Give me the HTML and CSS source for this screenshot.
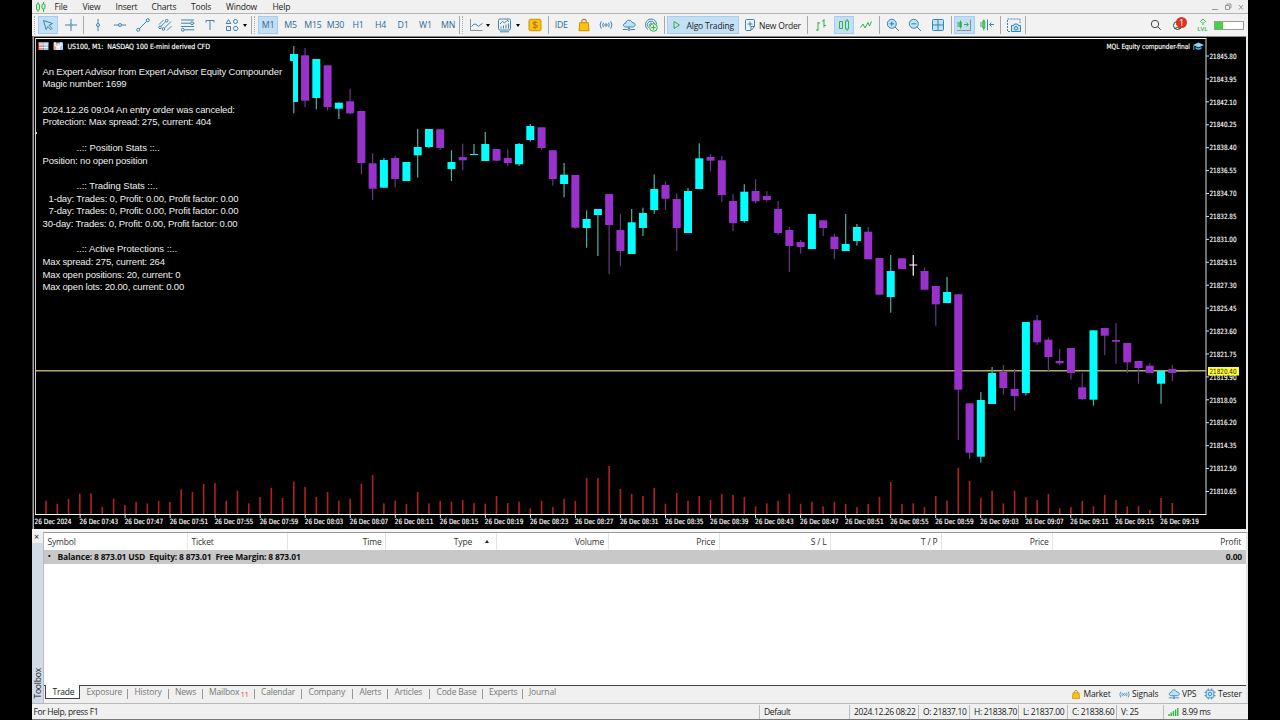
FILE: index.html
```html
<!DOCTYPE html>
<html lang="en">
<head>
<meta charset="utf-8">
<title>US100, M1</title>
<link rel="stylesheet" href="styles.css">
</head>
<body>
<div class="window">
  <header class="menubar">
    <svg class="logo" width="12" height="12" viewBox="0 0 12 12"><path d="M3 1v10M8.500 1v10" class="g"/><rect x="1.500" y="3" width="3" height="6" rx="1" class="g fillbg"/><rect x="7" y="3" width="3" height="5" rx="1" class="g fillbg"/></svg>
    <span>File</span><span>View</span><span>Insert</span><span>Charts</span><span>Tools</span><span>Window</span><span>Help</span>
    <svg class="winctl" width="36" height="10" viewBox="0 0 36 10"><path d="M1 7.500h6M14.500 3.500h4v4h-4zM16 3.500v-1.500h4v4h-1.500M28 3l4 4.500M32 3l-4 4.500"/></svg>
  </header>

  <nav class="toolbar">
    <i class="handle"></i>
    <div class="tool on"><svg width="14" height="14" viewBox="0 0 14 14"><path class="b" d="M2.500 2.500l9 3-3.500 1.800 3 3-1.200 1.300-3-3.100-1.700 3z"/></svg></div>
    <div class="tool"><svg width="14" height="14" viewBox="0 0 14 14"><path class="b" d="M7 1v4.500M7 8.500v4.500M1 7h4.500M8.500 7h4.500"/><circle class="b" cx="7" cy="7" r="1.200"/></svg></div>
    <i class="sep"></i>
    <div class="tool"><svg width="14" height="14" viewBox="0 0 14 14"><path class="b" d="M7 .8v4.700M7 8.500v4.700"/><circle class="b" cx="7" cy="7" r="1.500"/></svg></div>
    <div class="tool"><svg width="14" height="14" viewBox="0 0 14 14"><path class="b" d="M.8 7h4.700M8.500 7h4.700"/><circle class="b" cx="7" cy="7" r="1.500"/></svg></div>
    <div class="tool"><svg width="14" height="14" viewBox="0 0 14 14"><path class="b" d="M3.300 10.800l7.400-7.600"/><circle class="b" cx="2.200" cy="11.800" r="1.500"/><circle class="b" cx="11.800" cy="2.200" r="1.500"/></svg></div>
    <div class="tool"><svg width="14" height="14" viewBox="0 0 14 14"><path class="b" d="M3 8.300l4.700-4.700M6.500 10l6.500-6.500M1 6.500l4.500-4.500M9 12.500l4.500-4.500"/><circle class="b" cx="2" cy="9.300" r="1.300"/><circle class="b" cx="8.700" cy="2.700" r="1.300"/><circle class="b" cx="5.500" cy="11" r="1.300"/></svg></div>
    <div class="tool"><svg width="16" height="14" viewBox="0 0 16 14"><path class="b" d="M1 2h13M1 5.200h9.500M13.500 5.200h1M1 8.500h13M4.300 11.800h10"/><circle class="b" cx="12" cy="5.200" r="1.400"/><circle class="b" cx="2.800" cy="11.800" r="1.400"/></svg></div>
    <div class="tool"><svg width="14" height="14" viewBox="0 0 14 14"><path class="b" d="M3 4.500v-2h8v2M7 2.500v9.500"/></svg></div>
    <div class="tool"><svg width="14" height="14" viewBox="0 0 14 14"><path class="b" d="M3.500 1.500l2.300 4h-4.600zM1.500 8.500h4v4h-4z"/><circle class="b" cx="10.500" cy="3.500" r="2"/><path class="b" d="M9.500 8.500h2.300l1.200 2-1.200 2h-2.300l-1.200-2z"/></svg></div>
    <i class="caret"></i>
    <i class="sep end"></i>
    <i class="handle"></i>
    <div class="tool tf on">M1</div><div class="tool tf">M5</div><div class="tool tf">M15</div><div class="tool tf">M30</div><div class="tool tf">H1</div><div class="tool tf">H4</div><div class="tool tf">D1</div><div class="tool tf">W1</div><div class="tool tf">MN</div>
    <i class="sep"></i>
    <i class="handle"></i>
    <div class="tool"><svg width="14" height="14" viewBox="0 0 14 14"><path class="gray" d="M1.500 1v11.500h12"/><path class="b" d="M2.500 8.500l2.500-2.500 2 .3 2.500 2 4-3"/></svg></div>
    <i class="caret"></i>
    <div class="tool"><svg width="15" height="15" viewBox="0 0 15 15"><rect x="1.500" y="1" width="12" height="11" rx="1.500" class="b"/><path class="b" d="M3 6l2.500-2.500 2 1.500 2.500-2.500 2 1M4 10.500v-2M6.500 10.500v-3M9 10.500v-4M11.500 10.500v-5M3 13.800h9"/></svg></div>
    <i class="caret"></i>
    <div class="tool"><svg width="14" height="14" viewBox="0 0 14 14"><rect x="1" y="1.300" width="12" height="11.400" rx="1.500" class="gold"/><path class="goldline" d="M9.200 4.700c-.8-1-4.200-1-4.200.6 0 1.900 4.300 1 4.300 3 0 1.700-3.600 1.600-4.500.5M7 3v8.300"/></svg></div>
    <i class="sep"></i>
    <div class="tool tf">IDE</div>
    <div class="tool"><svg width="14" height="14" viewBox="0 0 14 14"><path class="goldline" d="M4.800 5v-1.700c0-2.600 4.400-2.600 4.400 0v1.700"/><path class="gold" d="M2.700 4.700h8.600l.7 8h-10z"/></svg></div>
    <div class="tool"><svg width="14" height="14" viewBox="0 0 14 14"><circle class="b" cx="7" cy="7" r="1.200"/><path class="b" d="M4.500 4.700q-1.500 2.300 0 4.600M9.500 4.700q1.500 2.300 0 4.600M2.300 3.300q-2.500 3.700 0 7.400M11.700 3.300q2.500 3.700 0 7.400"/></svg></div>
    <div class="tool"><svg width="14" height="14" viewBox="0 0 14 14"><path class="b sky" d="M3.500 9c-3-.3-2.500-3.800.2-3.700.3-4 5.500-4 6.300-.8 4 0 4 4.300.8 4.500z"/><path class="b" d="M1 11.500h4.500M8.500 11.500h4.500M7 9v1.500"/><circle class="b" cx="7" cy="11.500" r="1"/></svg></div>
    <div class="tool"><svg width="14" height="14" viewBox="0 0 14 14"><path class="b" d="M4 11.500c-4.500-3-2.500-10.500 3-10.500 3.500 0 5.500 2.500 5.500 5M4.500 9.500c-2.500-2.500-.8-6.300 2.500-6.300 2 0 3.300 1.300 3.500 3M5.500 8c-1.300-1.600 1.500-4 3-1.700"/><circle class="g fillbg" cx="9.500" cy="9.500" r="3.800"/><path class="g" d="M9.500 7.300v4.400M7.300 9.500h4.400"/></svg></div>
    <i class="sep mid"></i>
    <div class="tool on label algo"><svg width="10" height="10" viewBox="0 0 10 10"><path class="g" d="M2 1.500l5.500 3.500-5.500 3.500z"/></svg><span>Algo Trading</span></div>
    <div class="tool label order"><svg width="12" height="14" viewBox="0 0 12 14"><path class="b" d="M2.500 1.500h7q1 0 1 1v6l-3.500 4h-4.500q-1 0-1-1v-9q0-1 1-1zM7 12v-3.500h3.500M3.500 6h5M6 3.500v5"/></svg><span>New Order</span></div>
    <i class="sep"></i>
    <div class="tool"><svg width="14" height="14" viewBox="0 0 14 14"><path class="g" d="M4 4v9M2 12h2M4 5h2M10 1v8.500M8 3h2M10 7.500h2"/></svg></div>
    <div class="tool on"><svg width="14" height="14" viewBox="0 0 14 14"><path class="g" d="M2.500 3.500h3v7h-3zM10 1v2M10 11v2M8.500 3h3v8h-3z"/></svg></div>
    <div class="tool"><svg width="14" height="14" viewBox="0 0 14 14"><path class="g" d="M1.500 9.500l2.500-3.500 2 4 3-5.500 1.500 3.500 2-4.500"/></svg></div>
    <i class="sep mid"></i>
    <div class="tool"><svg width="14" height="14" viewBox="0 0 14 14"><circle class="b sky" cx="5.800" cy="5.800" r="4.500"/><path class="b" d="M9 9l4 4M3.500 5.800h4.600M5.800 3.500v4.600"/></svg></div>
    <div class="tool"><svg width="14" height="14" viewBox="0 0 14 14"><circle class="b sky" cx="5.800" cy="5.800" r="4.500"/><path class="b" d="M9 9l4 4M3.500 5.800h4.600"/></svg></div>
    <div class="tool"><svg width="14" height="14" viewBox="0 0 14 14"><rect class="b sky" x="1.500" y="1.500" width="11" height="11" rx="1"/><path class="b" d="M7 1.500v11M1.500 7h11"/></svg></div>
    <i class="sep mid"></i>
    <div class="tool on"><svg width="16" height="14" viewBox="0 0 16 14"><path class="g" d="M2 4v5M4.500 2.500v8M3.800 4h1.500v5h-1.500zM8 6.500h4M10.500 4.500l2 2-2 2"/><path class="gray" d="M14.500 1.500v11M1 12.500h13.500"/></svg></div>
    <div class="tool"><svg width="16" height="14" viewBox="0 0 16 14"><path class="g" d="M2 4v5M3.800 3h2v7h-2zM4.800 1.500v11"/><path class="b" d="M8.500 1.500v11M15 6.500h-4M12.500 4.500l-2 2 2 2"/></svg></div>
    <i class="sep mid"></i>
    <div class="tool"><svg width="16" height="15" viewBox="0 0 16 15"><path class="b dash" d="M4 13.500h-2.500v-12.500h12.500v4"/><path class="b sky" d="M5.500 7.500h2l1-1.500h3l1 1.500h2v6h-9z"/><circle class="b" cx="10" cy="10.300" r="1.700"/></svg></div>
    <i class="sep"></i>
    <div class="tool"><svg width="12" height="12" viewBox="0 0 12 12"><circle class="dark" cx="5" cy="5" r="3.700"/><path class="dark" d="M7.700 7.700l3 3"/></svg></div>
    <div class="tool bell"><svg width="14" height="14" viewBox="0 0 14 14"><circle class="dark" cx="5.500" cy="7.500" r="4"/><path class="dark" d="M2.500 10.500q3-2 6 0M4.500 6.500h2.500"/></svg><b>1</b></div>
    <div class="tool lvl"><svg width="8" height="8" viewBox="0 0 8 8"><path class="g" d="M4 7v-3M2.500 4.500l-1-1 2.500-2.500 2.500 2.500-1 1"/></svg><span>LVL</span></div>
    <div class="battery"><i></i></div>
  </nav>

  <main class="chart">
    <svg id="plot" class="plot" viewBox="32 36 1216 493" width="1216" height="493"></svg>
    <pre class="comment">An Expert Advisor from Expert Advisor Equity Compounder
Magic number: 1699

2024.12.26 09:04 An entry order was canceled:
Protection: Max spread: 275, current: 404

<span class="h">..:: Position Stats ::..</span>
Position: no open position

<span class="h">..:: Trading Stats ::..</span>
<span class="d1">1-day: Trades: 0, Profit: 0.00, Profit factor: 0.00</span>
<span class="d1">7-day: Trades: 0, Profit: 0.00, Profit factor: 0.00</span>
30-day: Trades: 0, Profit: 0.00, Profit factor: 0.00

<span class="h">..:: Active Protections ::..</span>
Max spread: 275, current: 264
Max open positions: 20, current: 0
Max open lots: 20.00, current: 0.00</pre>
  </main>

  <section class="toolbox">
    <aside class="rail"><span class="close">×</span><span class="railname">Toolbox</span></aside>
    <div class="panel">
      <div class="thead">
        <span class="l">Symbol</span><span class="l">Ticket</span><span>Time</span><span class="type">Type<i class="up"></i></span><span>Volume</span><span>Price</span><span>S / L</span><span>T / P</span><span>Price</span><span>Profit</span>
      </div>
      <div class="balance"><span class="dot">•</span><span class="sum">Balance: 8 873.01 USD&nbsp; Equity: 8 873.01&nbsp; Free Margin: 8 873.01</span><span class="total">0.00</span></div>
      <div class="rows"></div>
      <div class="tabs">
        <span class="cur">Trade</span><span>Exposure</span><span>History</span><span>News</span><span>Mailbox<sub>11</sub></span><span>Calendar</span><span>Company</span><span>Alerts</span><span>Articles</span><span>Code Base</span><span>Experts</span><span>Journal</span>
        <div class="services">
          <div><svg width="10" height="11" viewBox="0 0 14 14"><path class="goldline" d="M4.800 5v-1.700c0-2.600 4.400-2.600 4.400 0v1.700"/><path class="gold" d="M2.700 4.700h8.600l.7 8h-10z"/></svg><span>Market</span></div>
          <div><svg width="11" height="11" viewBox="0 0 14 14"><circle class="b" cx="7" cy="7" r="1.200"/><path class="b" d="M4.500 4.700q-1.500 2.300 0 4.600M9.500 4.700q1.500 2.300 0 4.600M2.300 3.300q-2.500 3.700 0 7.400M11.700 3.300q2.500 3.700 0 7.400"/></svg><span>Signals</span></div>
          <div><svg width="12" height="12" viewBox="0 0 14 14"><path class="b sky" d="M3.500 9c-3-.3-2.500-3.800.2-3.700.3-4 5.500-4 6.300-.8 4 0 4 4.300.8 4.500z"/><path class="b" d="M1 11.500h4.500M8.500 11.500h4.500M7 9v1.500"/><circle class="b" cx="7" cy="11.500" r="1"/></svg><span>VPS</span></div>
          <div><svg width="12" height="12" viewBox="0 0 14 14"><rect class="b sky" x="2.500" y="2.500" width="9" height="9" rx="2"/><circle class="b" cx="7" cy="7" r="2"/><path class="b" d="M5 .5v2M9 .5v2M5 11.500v2M9 11.500v2M.5 5h2M.5 9h2M11.500 5h2M11.500 9h2"/></svg><span>Tester</span></div>
        </div>
      </div>
    </div>
  </section>

  <footer class="status">
    <span>For Help, press F1</span><span>Default</span><span>2024.12.26 08:22</span><span>O: 21837.10</span><span>H: 21838.70</span><span>L: 21837.00</span><span>C: 21838.60</span><span>V: 25</span>
    <span class="net"><svg width="11" height="9" viewBox="0 0 11 9"><path d="M1 9v-2M3.200 9v-3.500M5.400 9v-5M7.600 9v-6.500M9.800 9v-8"/></svg>8.99 ms</span>
  </footer>
</div>
<script src="chart.js"></script>
</body>
</html>
```

FILE: styles.css
```css
* { box-sizing: border-box; }
body {
  margin: 0;
  background: #000;
  font-family: "Open Sans", "Noto Sans", sans-serif;
  font-size: 8.5px;
  letter-spacing: -0.18px;
  color: #222;
  overflow: hidden;
}
.window {
  width: 1216px;
  height: 720px;
  margin-left: 32px;
  background: #f0f0f0;
  display: flex;
  flex-direction: column;
}
svg { display: block; flex: none; fill: none; }
.b { stroke: #2878ae; stroke-width: 0.9; }
.g { stroke: #2eb344; stroke-width: 1; }
.gray { stroke: #8a9299; stroke-width: 1; }
.dark { stroke: #444; stroke-width: 1; }
.fillbg { fill: #e8f6e8; }
.sky { fill: #bfe3f8; }
.gold { fill: #fdc20f; stroke: #c98f08; stroke-width: 1; }
.goldline { stroke: #b77a08; stroke-width: 1.100; }
.dash { stroke-dasharray: 2 1; }

/* Menu */
.menubar {
  height: 14px;
  flex: none;
  display: grid;
  grid-template-columns: 22.500px 28px 33px 36px 39.500px 35px 46.500px 1fr 36px;
  align-items: center;
  line-height: 12px;
  border-bottom: 1px solid #b4b4b4;
  padding-right: 1px;
}
.logo { margin-left: 3px; }
.winctl { stroke: #999; }

/* Toolbar */
.toolbar {
  height: 22px;
  flex: none;
  display: grid;
  grid-template-columns:
    5px 22px 24px 4px 22px repeat(5, 22.500px) 21px 5px 4.500px 4.750px
    repeat(9, 22.500px) 1px 4.750px 21px 6px 24px 5px 27px 2px
    repeat(5, 22.500px) 4.500px 72px 68px 3px repeat(3, 22.500px) 4px
    repeat(3, 22.500px) 4px repeat(2, 22.500px) 4.500px 22.500px 1fr
    23px 24px 23px 30px;
  padding-right: 4px;
  align-items: center;
  background: #f2f2f2;
}
.tool {
  height: 18px;
  margin: 0 1px;
  display: flex;
  align-items: center;
  justify-content: center;
}
.on { background: #c2dff5; box-shadow: inset 0 0 0 1px #a5cdec; }
.tf { color: #2a6a96; font-size: 8.800px; }
.sep { height: 18px; border-left: 1px solid #a8a8a8; }
.sep.end { border-left: 0; border-right: 1px solid #a8a8a8; }
.sep.mid { margin-left: 1.500px; }
.handle { height: 18px; margin-left: 2px; border-left: 1px dotted #aaa; }
.caret { width: 0; height: 0; border: 2.500px solid transparent; border-top: 3px solid #000; border-bottom: 0; }
.label { justify-content: flex-start; }
.algo { margin: 0; padding-left: 5px; gap: 4.500px; }
.order { margin: 0; padding-left: 5px; gap: 3px; }
.bell { position: relative; }
.bell b {
  position: absolute;
  left: 8px;
  top: 1px;
  width: 11px;
  height: 11px;
  border-radius: 50%;
  background: #dd3322;
  color: #fff;
  font-size: 9px;
  font-weight: 400;
  line-height: 11px;
  text-align: center;
}
.lvl { flex-direction: column; color: #2eb344; font-size: 6px; font-weight: 600; line-height: 6px; letter-spacing: 0; }
.battery { height: 9px; border: 1px solid #999; background: #fff; }
.battery i { display: block; width: 8px; height: 7px; background: #41d541; }

/* Chart */
.chart { position: relative; height: 493px; flex: none; background: #000; }
.plot text {
  font-family: "DejaVu Sans Condensed", "DejaVu Sans", sans-serif;
  font-size: 7.200px;
  letter-spacing: 0;
  fill: #fff;
  stroke: #fff;
  stroke-width: 0.150;
}
.plot .now { fill: #222; stroke: none; }
.comment {
  position: absolute;
  left: 10.500px;
  top: 29.700px;
  margin: 0;
  font: 9.500px/12.680px "Liberation Sans", Arial, sans-serif;
  letter-spacing: -0.150px;
  color: #eee;
}
.h { padding-left: 34px; letter-spacing: -0.050px; }
.d1 { padding-left: 6px; }

/* Toolbox */
.toolbox { height: 174px; flex: none; display: flex; border-top: 3px solid #f4f4f4; }
.rail { width: 11px; display: flex; flex-direction: column; justify-content: space-between; background: #cfdbe8; }
.close { height: 11px; background: #f0f0f0; text-align: center; font-size: 9px; line-height: 9px; padding-right: 2px; }
.railname { writing-mode: vertical-rl; transform: rotate(180deg); line-height: 11px; margin-bottom: 4px; }
.panel { flex: 1; display: flex; flex-direction: column; border-top: 1px solid #999; border-right: 2px solid #e6e6e6; border-left: 1px solid #bbb; background: #fff; }
.thead {
  height: 17px;
  display: grid;
  grid-template-columns: 144px 100px 98px 111px 111.500px 111px 111.500px 111px 111px 1fr;
  line-height: 17px;
  text-align: right;
  color: #333;
}
.thead span { border-right: 1px solid #e4e4e4; padding: 0 3.500px; }
.thead .l { text-align: left; }
.thead .type { padding-right: 24px; position: relative; }
.thead span:last-child { border-right: 0; padding-right: 5px; }
.up { position: absolute; right: 7px; top: 7px; border: 2.500px solid transparent; border-bottom: 3px solid #222; border-top: 0; }
.balance { height: 14px; background: #c8c8c8; display: flex; line-height: 14px; font-weight: 700; color: #111; padding: 0 4px; letter-spacing: -0.190px; }
.dot { width: 9.500px; font-size: 7px; }
.total { margin-left: auto; }
.rows { flex: 1; }
.tabs {
  height: 18px;
  display: grid;
  grid-template-columns: 36px 48px 40.500px 34px 52px 47.500px 51px 35px 42px 52.500px 40px 36px 1fr;
  background: #f0f0f0;
  border-top: 1px solid #444;
  color: #777;
  line-height: 12px;
}
.tabs > span { position: relative; padding-left: 6.500px; white-space: nowrap; }
.tabs > span:not(.cur):not(:nth-child(12))::after {
  content: "";
  position: absolute;
  right: 0;
  top: 3px;
  height: 10px;
  border-right: 1px solid #999;
}
.tabs .cur { height: 14px; margin: -1px 0 0 1px; background: #fff; color: #222; border: solid #444; border-width: 0 1px 1.500px; line-height: 14px; }
.tabs sub { color: #e03020; font-size: 7px; line-height: 0; margin-left: 1.500px; vertical-align: -2px; letter-spacing: 0; }
.services {
  justify-self: end;
  display: grid;
  grid-template-columns: 47.500px 49px 36px 42.500px;
  color: #222;
  line-height: 16px;
  height: 15px;
}
.services div { display: flex; align-items: center; gap: 2.500px; }

/* Status bar */
.status {
  flex: 1;
  display: grid;
  grid-template-columns: 728px 90px 69px 51px 49px 49px 49px 47px 1fr;
  border-top: 1px solid #b8b8b8;
  border-bottom: 1px solid #777;
  align-items: center;
  letter-spacing: -0.350px;
}
.status span { border-right: 1px solid #bbb; padding-left: 4px; line-height: 14px; white-space: nowrap; }
.status span:first-child { padding-left: 1.500px; }
.status .net { display: flex; align-items: center; gap: 3px; border: 0; }
.net svg { stroke: #2eb344; stroke-width: 1.400; }
```

FILE: chart.js
```js
const FIRST_X = 46, STEP = 11.263, BASE = 514;
const UP = "#00ffff", DOWN = "#9932cc";

// [direction, body top, body bottom, high, low], starting at bar 22
const candles = [
  ["u",54,102,46,113.3],["d",55.3,100.7,48,107],["u",59,98,59,109.3],["d",65.3,107,65.3,110.7],
  ["u",102.7,108.7,102.7,119],["d",101.3,113.3,88.7,114],["d",111,163,111,174.3],["d",163.3,188.7,153.3,200],
  ["u",160,187.7,158,187.7],["d",158,179,155.3,187.3],["u",162,181,162,181],["u",147,155.3,129,177.7],
  ["u",129,147,129,148],["d",129.3,148,129.3,150],["u",162,169,150.3,181],["d",157,160.3,143.7,170.3],
  ["u",154,155,144,155],["u",144,161,132,161],["d",149,160.7,149,160.7],["d",158,163,149.3,166],
  ["u",144,164.3,143,166],["u",126,140,124,141.7],["d",127.3,148,127.3,150],["d",150.3,179,150.3,185.7],
  ["u",174.7,184,163,197.3],["d",175,227.7,175,228.7],["u",219,228,210.3,247.7],["u",209,215,209,256],
  ["d",194,225,194,274],["d",230,251,214,266],["u",222.3,254,209,254],["u",213,228,207.7,236],
  ["u",189,210,174.3,213.7],["d",185,198.7,181.3,210],["d",199,228,193.3,251],["u",191,233,188,233],
  ["u",158.3,189,143.3,189],["d",157,160.7,154,171.3],["d",160.3,195,155.7,202],["d",201,223,194,231],
  ["u",191.7,221,184.3,222.7],["d",191,201.3,179.3,203.3],["d",196,200,191,201.7],["d",209,233,201,234.7],
  ["d",230,246,227,272],["d",242,247,240,253.7],["u",214,249,214,249],["d",220.3,228,220.3,236],
  ["d",236.7,249,233.7,259.3],["u",244,251,214,251],["u",227,241,224,245.7],["d",231.7,259.3,227,259.3],
  ["d",258,294.7,258,294.7],["u",271,297,255,312.7],["d",258.3,269,258.3,269],["x",264.5,265.5,255,275.7],
  ["d",271,289.7,267.3,289.7],["d",286,304.3,286,325.7],["u",292,303,277,303],["d",294.3,389.7,294.3,440],
  ["d",403.3,452.7,403.3,459],["u",400,456.7,392,462.7],["u",373,404,367,404],["d",372,388,365,394.7],
  ["d",389,396,369,410.7],["u",322,393,322,395.7],["d",320.3,342.3,315,345],["d",339.7,357,337.7,371],
  ["d",361,363.3,349,365],["d",348,373,348,379.7],["d",387.3,399,373,400],["u",330.3,399.7,330.3,405.7],
  ["d",328,335.7,328,355],["d",340,341.7,323,363.7],["d",343,362.3,343,373.3],["d",361,368,361,383.7],
  ["d",365.7,373,363,373],["u",371,383.7,371,403.7],["d",369,373,365,381.3]
];

// Volume bar tops, in thirds of a pixel below y = 450
const volumes = [
  152,162,147,131,130,171,146,165,155,160,153,156,118,126,102,99,152,122,160,141,113,144,95,111,141,
  126,152,146,101,75,160,152,162,126,160,153,155,150,159,161,138,159,155,175,152,171,146,153,84,84,48,
  117,132,138,114,161,129,152,138,150,132,135,141,169,160,153,132,161,155,169,155,162,171,162,141,96,
  162,160,171,138,152,53,93,144,122,160,122,141,150,132,175,171,153,169,135,150,169,168,180,144,159
];

const out = [];
const rect = (x, y, w, h, c) => out.push(`<rect x="${x}" y="${y}" width="${w}" height="${h}" fill="${c}"/>`);
const text = (x, y, len, s, cls) =>
  out.push(`<text x="${x}" y="${y}" textLength="${len}" lengthAdjust="spacingAndGlyphs" class="${cls || ""}" xml:space="preserve">${s}</text>`);

// Window frame
rect(32, 36, 1215, 1, "#8c8c8c");
rect(32, 36, 1, 493, "#555");
rect(33, 37, 1, 492, "#aaa");
rect(1246, 36, 2, 493, "#e8e8e8");
rect(35, 38, 1171, 1, "#fff");
rect(35, 38, 1, 477, "#ccc");
rect(1205.5, 38, 1, 477, "#ddd");
rect(35, 514, 1171, 1, "#fff");

// Current price
rect(36, 370, 1170, 1.5, "#b0ac66");

volumes.forEach((v, i) => {
  const top = 450 + v / 3;
  rect(FIRST_X + i * STEP - 0.8, top, 1.6, BASE - top, "#b3201f");
});

candles.forEach(([dir, top, bottom, high, low], n) => {
  const x = FIRST_X + (n + 22) * STEP;
  const wick = { u: "#4fb0a4", d: "#643a82", x: "#fff" }[dir];
  const body = { u: UP, d: DOWN, x: "#fff" }[dir];
  rect(x - 0.6, high, 1.2, low - high, wick);
  if (n === 0) {
    rect(290, top, 8, 7, body);
    rect(293, top, 5, bottom - top, body);
  } else {
    rect(x - 4, top, 8, bottom - top, body);
  }
});
rect(1176, 370.5, 12, 1, "#b0ac66");

for (let n = 0; n < 20; n++) {
  const y = 56 + n * 22.92;
  rect(1206, y - 0.5, 3, 1, "#ddd");
  text(1209.5, y + 2.7, 27, (21845.8 - n * 1.85).toFixed(2));
}
rect(1208, 367, 31, 8.5, "#ffff33");
text(1209.5, 373.7, 27, "21820.40", "now");

text(34.5, 523.5, 37, "26 Dec 2024");
for (let n = 0; n < 25; n++) {
  const x = 79.6 + n * 45.03;
  const m = 463 + n * 4;
  const label = `0${Math.floor(m / 60)}:${String(m % 60).padStart(2, "0")}`;
  rect(x, 515, 1, 3, "#ddd");
  text(x, 523.5, 38.5, `26 Dec ${label}`);
}

text(67.5, 48.6, 142.5, "US100, M1:  NASDAQ 100 E-mini derived CFD");
text(1106.5, 48.6, 83.5, "MQL Equity compunder-final");

// Header glyphs
rect(38.5, 42.5, 5, 7.5, "#e98a8a"); rect(43.5, 42.5, 5, 7.5, "#9cc8ee");
[44.5, 47].forEach(y => rect(39, y, 9, 0.8, "#fff"));
rect(38.5, 42.5, 10, 1, "#eee");
rect(53.5, 42.5, 4.5, 7.5, "#e9a0a0"); rect(58, 42.5, 5, 7.5, "#a9d0f2");
out.push('<path d="M55 42v3l2 2v3M61 42v3l-2 2v3M58 44v4" stroke="#fff" stroke-width="1.2"/>');
out.push('<path d="M1193 45l5.500-2.500 5.500 2.500-5.500 2.500z" fill="#8fd0ff"/><path d="M1195.500 47v2q3 1.500 6 0v-2l-3 1.300z" fill="#58a8e0"/><path d="M1193.800 45.500v4.500" stroke="#58a8e0"/>');
rect(35, 132, 2, 2, "#ddd");

document.getElementById("plot").innerHTML = out.join("");
```
